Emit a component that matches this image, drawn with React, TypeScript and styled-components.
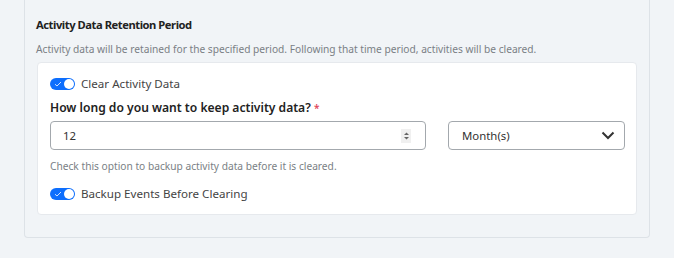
import React from "react";
import styled, { createGlobalStyle } from "styled-components";

const GlobalStyle = createGlobalStyle`
  html, body {
    margin: 0;
    padding: 0;
    background: #f1f4f7;
    font-family: "Noto Sans", "Open Sans", sans-serif;
  }
`;

const Switch: React.FC = () => (
  <Track>
    <svg width="8" height="6" viewBox="0 0 8 6">
      <path d="M1 3.2 L3 5 L7 1" fill="none" stroke="#cfe0ff" strokeWidth="1" />
    </svg>
    <Knob />
  </Track>
);

const App: React.FC = () => {
  return (
    <>
      <GlobalStyle />
      <Page>
        <Section>
          <Title>Activity Data Retention Period</Title>
          <Desc>
            Activity data will be retained for the specified period. Following that time period,
            activities will be cleared.
          </Desc>
          <Card>
            <ToggleRow>
              <Switch />
              <span>Clear Activity Data</span>
            </ToggleRow>
            <Label>
              How long do you want to keep activity data? <Req>*</Req>
            </Label>
            <Fields>
              <NumberBox>
                <span>12</span>
                <Spinner>
                  <svg width="7" height="10" viewBox="0 0 7 10">
                    <path d="M1 4 L3.5 1.5 L6 4 Z" fill="#666" />
                    <path d="M1 6 L3.5 8.5 L6 6 Z" fill="#666" />
                  </svg>
                </Spinner>
              </NumberBox>
              <SelectBox>
                <span>Month(s)</span>
                <svg width="14" height="9" viewBox="0 0 14 9">
                  <path d="M1.5 1.5 L7 7 L12.5 1.5" fill="none" stroke="#333" strokeWidth="2" />
                </svg>
              </SelectBox>
            </Fields>
            <Help>Check this option to backup activity data before it is cleared.</Help>
            <ToggleRow $gap={13}>
              <Switch />
              <span>Backup Events Before Clearing</span>
            </ToggleRow>
          </Card>
        </Section>
      </Page>
    </>
  );
};

export default App;

const Page = styled.div`
  padding: 0 24px;
  width: 626px;
  height: 258px;
`;

const Section = styled.div`
  border: 1px solid #dde2e7;
  border-top: none;
  border-radius: 0 0 4px 4px;
  padding: 16px 12px 22px 11px;
  background: #f1f4f7;
`;

const Title = styled.div`
  font-size: 11.2px;
  font-weight: 700;
  letter-spacing: -0.45px;
  color: #222;
  line-height: 18px;
`;

const Desc = styled.div`
  margin-top: 8px;
  font-size: 10.2px;
  color: #7a7f85;
  line-height: 15px;
`;

const Card = styled.div`
  margin-top: 5px;
  margin-left: 1px;
  background: #fff;
  border: 1px solid #e6e9ed;
  border-radius: 4px;
  padding: 14px 11px 13px 12px;
`;

const ToggleRow = styled.div<{ $gap?: number }>`
  display: flex;
  align-items: center;
  gap: 6px;
  margin-top: ${({ $gap }) => $gap ?? 0}px;
  font-size: 11.6px;
  color: #444;
  line-height: 14px;
`;

const Track = styled.div`
  width: 25px;
  height: 12px;
  border-radius: 6px;
  background: #0d6efd;
  display: flex;
  align-items: center;
  justify-content: space-between;
  padding: 0 1px 0 4px;
  box-sizing: border-box;
`;

const Knob = styled.div`
  width: 10px;
  height: 10px;
  border-radius: 50%;
  background: #fff;
`;

const Label = styled.div`
  margin-top: 8px;
  font-size: 12.1px;
  font-weight: 600;
  color: #222;
  line-height: 18px;
`;

const Req = styled.span`
  color: #e0455a;
  font-size: 10px;
`;

const Fields = styled.div`
  display: grid;
  grid-template-columns: 376px 177px;
  column-gap: 22px;
  margin-top: 4px;
`;

const Box = styled.div`
  height: 29px;
  border: 1px solid #a3a8ad;
  border-radius: 4px;
  box-sizing: border-box;
  display: flex;
  align-items: center;
  justify-content: space-between;
  padding: 0 14px 0 12px;
  font-size: 11.4px;
  color: #333;
`;

const NumberBox = styled(Box)`
  padding-right: 14px;
`;

const Spinner = styled.div`
  width: 10px;
  height: 14px;
  background: #f0f0f0;
  display: flex;
  align-items: center;
  justify-content: center;
`;

const SelectBox = styled(Box)`
  padding-left: 13px;
  padding-right: 9px;
`;

const Help = styled.div`
  margin-top: 9px;
  font-size: 10.2px;
  color: #7a7f85;
  line-height: 15px;
`;
